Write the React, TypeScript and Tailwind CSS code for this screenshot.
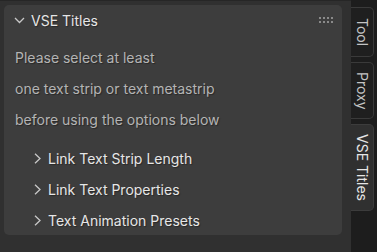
import React from 'react';

const notes = [
  'Please select at least',
  'one text strip or text metastrip',
  'before using the options below',
];

const subPanels = ['Link Text Strip Length', 'Link Text Properties', 'Text Animation Presets'];

const tabs = [
  { label: 'Tool', height: 'h-[50px]', active: false },
  { label: 'Proxy', height: 'h-[57px]', active: false },
  { label: 'VSE Titles', height: 'h-[87px]', active: true },
];

function ChevronDown() {
  return (
    <svg width="11" height="7" viewBox="0 0 11 7" fill="none">
      <path d="M1 1l4.5 4.5L10 1" stroke="#c8c8c8" strokeWidth="1.3" />
    </svg>
  );
}

function ChevronRight() {
  return (
    <svg width="7" height="11" viewBox="0 0 7 11" fill="none">
      <path d="M1 0.8l5 4.7-5 4.7" stroke="#c8c8c8" strokeWidth="1.3" />
    </svg>
  );
}

function DragHandle() {
  return (
    <div className="grid grid-cols-4 gap-x-[2px] gap-y-[2px]">
      {Array.from({ length: 8 }).map((_, i) => (
        <div key={i} className="w-[2px] h-[2px] bg-[#8a8a8a]" />
      ))}
    </div>
  );
}

export default function App() {
  return (
    <div
      className="w-[377px] h-[252px] flex bg-[#303030] overflow-hidden text-[#e6e6e6]"
      style={{ fontFamily: 'Inter, "Noto Sans", sans-serif' }}
    >
      <div className="flex-1 pl-[4px] pt-[4px] border-t border-[#262626]">
        <div className="w-[338px] h-[230px] rounded-[5px] bg-[#3d3d3d] [text-shadow:1px_1px_1px_rgba(0,0,0,0.35)]">
          <div className="h-[30px] flex items-center pl-[10px] pr-[9px]">
            <ChevronDown />
            <span className="ml-[6px] text-[14px] text-[#e6e6e6]">VSE Titles</span>
            <div className="ml-auto">
              <DragHandle />
            </div>
          </div>
          <div className="pt-[7px] pl-[11px]">
            {notes.map((n) => (
              <div key={n} className="h-[31px] flex items-center text-[14px] text-[#b4b4b4]">
                {n}
              </div>
            ))}
          </div>
          <div className="pt-[8px] pl-[30px]">
            {subPanels.map((p) => (
              <div key={p} className="h-[31px] flex items-center">
                <ChevronRight />
                <span className="ml-[7px] text-[14px] text-[#e6e6e6]">{p}</span>
              </div>
            ))}
          </div>
        </div>
      </div>
      <div className="w-[26px] h-full bg-[#1d1d1d] flex flex-col gap-[5px] pt-[7px]">
        {tabs.map((t) => (
          <div
            key={t.label}
            className={`${t.height} w-[23px] rounded-r-[5px] flex items-center justify-center border border-l-0 ${
              t.active ? 'bg-[#303030] border-[#3c3c3c]' : 'bg-[#1f1f1f] border-[#3a3a3a]'
            }`}
          >
            <span
              className={`[writing-mode:vertical-rl] text-[14px] leading-none ${
                t.active ? 'text-[#e6e6e6]' : 'text-[#c4c4c4]'
              }`}
            >
              {t.label}
            </span>
          </div>
        ))}
      </div>
    </div>
  );
}
